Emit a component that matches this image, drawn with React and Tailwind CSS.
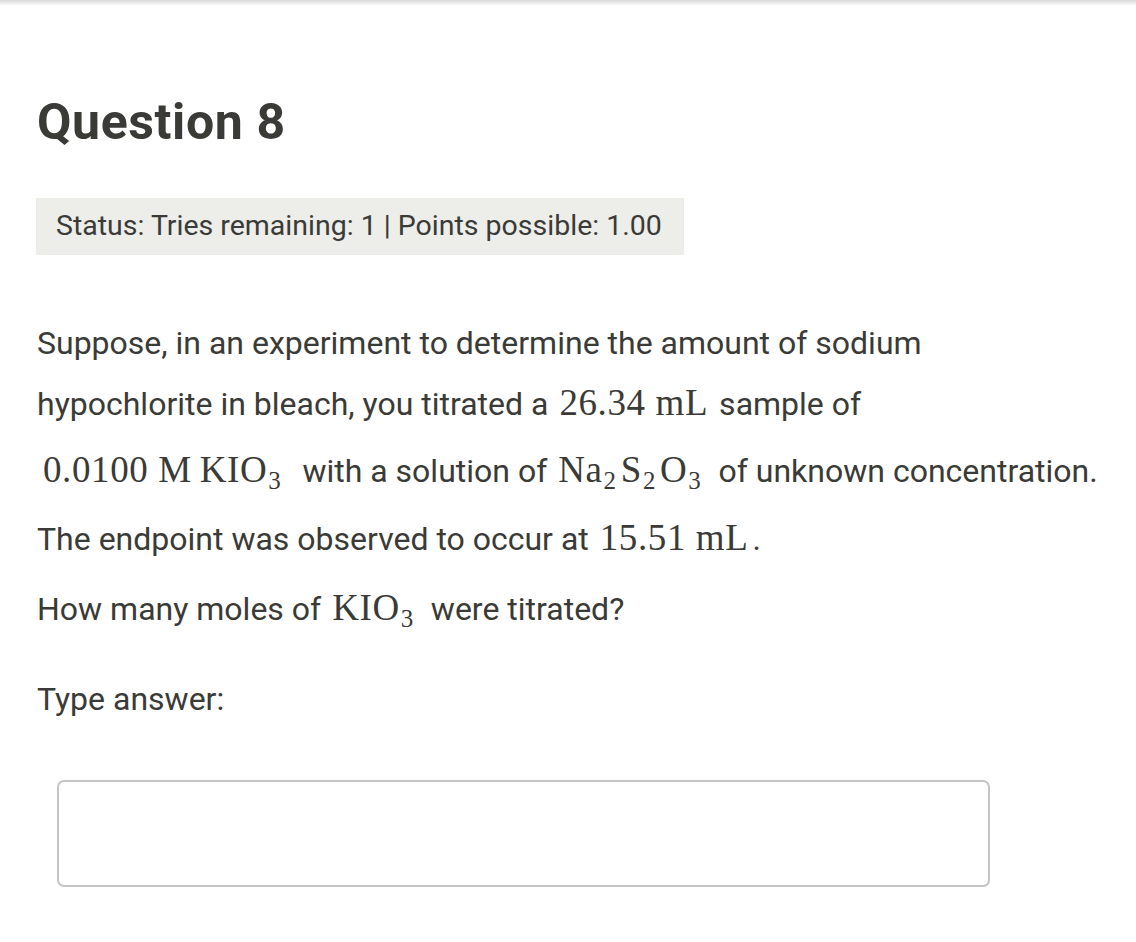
import React from 'react';

const M = ({ children, className = 'mx-[11px]' }) => (
  <span className={`font-['Liberation_Serif','DejaVu_Serif',serif] text-[37px] tracking-[0.6px] whitespace-nowrap ${className}`}>{children}</span>
);

const Sub = ({ children, end }) => (
  <span className={`text-[25px] align-[-7px] leading-none ml-[1px] ${end ? 'mr-[6px]' : 'mr-[4px]'}`}>{children}</span>
);

export default function App() {
  return (
    <div className="min-h-[942px] w-[1136px] bg-white font-['Roboto',sans-serif] text-[#3a3a37] relative">
      <div className="h-[6px] bg-gradient-to-b from-[#d9d9d9] to-white" />
      <div className="pl-[37px] pt-[91px]">
        <h1 className="text-[50px] font-bold leading-none tracking-[0.6px]">Question 8</h1>
        <div className="mt-[51px] w-[648px] h-[57px] -ml-[1px] bg-[#ededea] flex items-center pl-[20px] text-[28.5px]">
          Status: Tries remaining: 1 | Points possible: 1.00
        </div>
        <div className="mt-[66px] text-[32px] leading-[44px]">
          <p>Suppose, in an experiment to determine the amount of sodium</p>
          <p className="mt-[16px]">
            hypochlorite in bleach, you titrated a<M>26.34&nbsp;mL</M>sample of
          </p>
          <p className="mt-[22px]">
            <M className="ml-[6px] mr-[15px]">0.0100&nbsp;M&thinsp;KIO<Sub end>3</Sub></M>with a solution of<M>Na<Sub>2</Sub>S<Sub>2</Sub>O<Sub end>3</Sub></M>of unknown concentration.
          </p>
          <p className="mt-[23px]">
            The endpoint was observed to occur at<M className="ml-[11px] mr-[4px]">15.51&nbsp;mL</M>.
          </p>
          <p className="mt-[25px]">
            How many moles of<M>KIO<Sub end>3</Sub></M>were titrated?
          </p>
          <p className="mt-[46px]">Type answer:</p>
        </div>
        <div className="mt-[59px] ml-[20px] w-[933px] h-[107px] border-2 border-[#c4c4c4] rounded-[7px]" />
      </div>
    </div>
  );
}
